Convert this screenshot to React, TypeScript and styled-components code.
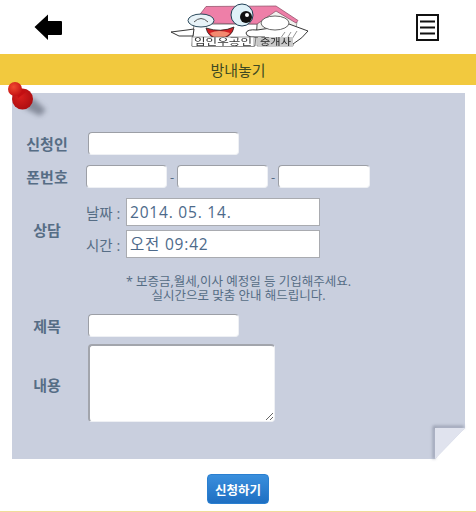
import React from "react";
import styled, { createGlobalStyle } from "styled-components";

const GlobalStyle = createGlobalStyle`
    html, body {
        margin: 0;
        padding: 0;
        background: #fff;
        font-family: "Open Sans", "Noto Sans CJK KR", sans-serif;
    }
    * {
        box-sizing: border-box;
    }
`;

const Page = styled.div`
    position: relative;
    width: 476px;
    height: 512px;
    overflow: hidden;
    display: flex;
    flex-direction: column;
    border-bottom: 1px solid #f0dc9a;
`;

const Header = styled.header`
    height: 54px;
    padding: 0 37px 0 34px;
    display: flex;
    align-items: center;
    justify-content: space-between;
`;

const Logo = styled.svg`
    width: 147px;
    height: 50px;
    margin-bottom: 4px;
    filter: blur(0.4px);
`;

const TitleBar = styled.div`
    height: 31px;
    background: #f2c93e;
    color: #3f4a22;
    font-size: 15px;
    line-height: 32px;
    text-align: center;
`;

const Panel = styled.main`
    position: relative;
    margin: 8px 11px 0 12px;
    height: 366px;
    padding-top: 39px;
    background: #c9cfde;
    clip-path: polygon(0 0, 100% 0, 100% 335px, 423px 100%, 0 100%);
`;

const Row = styled.div<{ $mt?: number; $h: number }>`
    display: grid;
    grid-template-columns: 70px 1fr;
    align-items: center;
    height: ${({ $h }) => $h}px;
    margin-top: ${({ $mt }) => $mt ?? 0}px;
`;

const Label = styled.label<{ $nudge?: number }>`
    padding-top: ${({ $nudge }) => $nudge ?? 0}px;
    text-align: center;
    color: #566d85;
    font-size: 15px;
    font-weight: 700;
    line-height: 20px;
`;

const TextField = styled.input`
    display: block;
    width: 151px;
    height: 23px;
    margin-left: 6px;
    background: #fff;
    border: 1px solid #eef0f4;
    border-top: 1px solid #9c9fa6;
    border-left: 1px solid #9c9fa6;
    border-radius: 4px;
    outline: none;
`;

const PhoneGroup = styled.div`
    display: flex;
    align-items: center;
    margin-left: 4px;
    color: #566d85;
    font-size: 13px;
`;

const PhoneField = styled(TextField)<{ $w: number }>`
    width: ${({ $w }) => $w}px;
    margin-left: 0;
`;

const Dash = styled.span`
    width: 10px;
    text-align: center;
    line-height: 20px;
`;

const Schedule = styled.div`
    display: flex;
    flex-direction: column;
    gap: 4px;
    margin-left: 4px;
`;

const ScheduleLine = styled.div`
    display: flex;
    align-items: center;
    color: #566d85;
    font-size: 14.5px;
`;

const ScheduleName = styled.span`
    width: 40px;
    white-space: nowrap;
`;

const ScheduleValue = styled.div`
    width: 194px;
    height: 28px;
    padding-left: 3px;
    background: #fff;
    border: 1px solid #a9abb0;
    color: #4d6a8a;
    font-size: 15.5px;
    letter-spacing: 0.8px;
    line-height: 27px;
`;

const Note = styled.p`
    margin: 17px 0 0 0;
    color: #566d85;
    font-size: 12.5px;
    line-height: 14px;
    text-align: center;
`;

const Memo = styled.textarea`
    display: block;
    width: 187px;
    height: 78px;
    margin-left: 6px;
    background: #fff;
    border: 1px solid #eef0f4;
    border-top: 2px solid #a2a5ac;
    border-left: 2px solid #a2a5ac;
    border-radius: 4px;
    outline: none;
`;

const Pin = styled.svg`
    position: absolute;
    left: 6px;
    top: 80px;
    width: 44px;
    height: 40px;
`;

const Fold = styled.svg`
    position: absolute;
    left: 428px;
    top: 420px;
    width: 40px;
    height: 42px;
`;

const Footer = styled.div`
    flex: 1;
    display: flex;
    justify-content: center;
    padding: 15px 0 0 0;
`;

const Submit = styled.button`
    width: 62px;
    height: 30px;
    padding: 0;
    border: 1px solid #2a7fd0;
    border-radius: 4px;
    background: linear-gradient(#3a8fdd, #1f6fc2);
    color: #fff;
    font-family: inherit;
    font-size: 12.5px;
    font-weight: 700;
`;

const BackIcon = () => (
    <svg width="28" height="26" viewBox="0 0 28 26">
        <path d="M0.5 13 L14 0.5 L14 7 L27 7 Q28 7 28 8 L28 20 Q28 21 27 21 L14 21 L14 26 Z" fill="#000" />
    </svg>
);

const MenuIcon = () => (
    <svg width="23" height="27" viewBox="0 0 23 27">
        <rect x="1" y="1" width="21" height="25" fill="#fff" stroke="#111" strokeWidth="2" />
        <path d="M4 7.5H19M4 13.5H19M4 19.5H19" stroke="#111" strokeWidth="2" />
    </svg>
);

const LogoArt = () => (
    <Logo viewBox="165 0 147 50">
        {/* roof and wall */}
        <path d="M256 24 L275 9 L296 22 L292 46 L256 46 Z" fill="#f1f1ee" stroke="#777" strokeWidth="0.7" />
        <path d="M193 24 L256 24 L254 46 L191 46 Z" fill="#fff" stroke="#444" strokeWidth="0.7" />
        <path d="M197 17 L205 6.5 L275 6 L297 20.5 L295 23 L275 11 L256 24 L196 23 Z" fill="#ee7fa8" stroke="#8a4660" strokeWidth="0.7" />
        {/* left arm */}
        <path d="M170 32 L186 30 L193 29 L192 36 L178 36 L174 34 Z" fill="#fff" stroke="#222" strokeWidth="0.9" />
        {/* eyes */}
        <ellipse cx="200" cy="20.5" rx="13" ry="6.5" fill="#e8f3f8" stroke="#2b4a5c" strokeWidth="1" />
        <path d="M193 22 Q200 15 207 22" fill="none" stroke="#444" strokeWidth="0.9" />
        <circle cx="241" cy="15" r="11" fill="#dff1f8" stroke="#1f3f55" strokeWidth="1" />
        <circle cx="245" cy="17" r="6" fill="#111" />
        <circle cx="246" cy="15" r="2" fill="#fff" />
        {/* mouth */}
        <path d="M205 28 Q220 33 233 27 Q231 38 218 38.5 Q207 38 205 28 Z" fill="#d21f24" stroke="#222" strokeWidth="0.8" />
        <path d="M209 33 Q218 29 229 33 Q225 38 218 38 Q212 38 209 33 Z" fill="#f38a70" />
        {/* pointing hand */}
        <path d="M245 33 Q246 29 256 30 L270 28 L288 24 L307 31 Q302 38 292 44 L272 45 L264 37 L250 37 Q245 36 245 33 Z" fill="#fff" stroke="#222" strokeWidth="0.9" />
        <ellipse cx="274" cy="23" rx="14" ry="7" fill="#fff" stroke="#555" strokeWidth="0.9" />
        <path d="M284 32 L279 39 M290 32 L285 40 M296 31 L291 39" stroke="#666" strokeWidth="0.7" />
        {/* name plate */}
        <rect x="191" y="37" width="62" height="9.5" fill="#fff" stroke="#444" strokeWidth="0.5" />
        <rect x="257" y="37" width="35" height="9.5" fill="#c9c9c9" />
        <text x="193" y="45" fontSize="9.5" fill="#333" textLength="58" lengthAdjust="spacingAndGlyphs" fontFamily="Noto Sans CJK KR, sans-serif">임인우공인</text>
        <text x="259" y="45" fontSize="9.5" fill="#222" textLength="31" lengthAdjust="spacingAndGlyphs" fontFamily="Noto Sans CJK KR, sans-serif">중개사</text>
    </Logo>
);

const PinArt = () => (
    <Pin viewBox="0 0 44 40">
        <defs>
            <radialGradient id="pinHead" cx="0.4" cy="0.35" r="0.7">
                <stop offset="0" stopColor="#f04a30" />
                <stop offset="1" stopColor="#c30f12" />
            </radialGradient>
            <radialGradient id="pinBody" cx="0.4" cy="0.4" r="0.7">
                <stop offset="0" stopColor="#d81e1c" />
                <stop offset="1" stopColor="#a80c10" />
            </radialGradient>
            <filter id="pinShadow" x="-50%" y="-50%" width="200%" height="200%">
                <feGaussianBlur stdDeviation="2.6" />
            </filter>
        </defs>
        <path d="M18 28 L34 36 L40 30 L26 17 Z" fill="#5a6070" opacity="0.6" filter="url(#pinShadow)" />
        <circle cx="16.5" cy="19" r="10.5" fill="url(#pinBody)" />
        <path d="M9 5 L20 12 L12 18 Z" fill="#c30f12" />
        <circle cx="9" cy="9" r="7" fill="url(#pinHead)" />
    </Pin>
);

const FoldArt = () => (
    <Fold viewBox="0 0 40 42">
        <defs>
            <filter id="foldShadow" x="-30%" y="-30%" width="160%" height="160%">
                <feGaussianBlur stdDeviation="1.4" />
            </filter>
        </defs>
        <path d="M6 39 L6 7 L36 7" fill="none" stroke="#7c8296" strokeWidth="2.4" opacity="0.7" filter="url(#foldShadow)" />
        <path d="M7 39 L7 8 L37 8 Z" fill="#e0e3ee" />
    </Fold>
);

const App: React.FC = () => {
    return (
        <>
            <GlobalStyle />
            <Page>
                <Header>
                    <BackIcon />
                    <LogoArt />
                    <MenuIcon />
                </Header>
                <TitleBar>방내놓기</TitleBar>
                <Panel>
                    <Row $h={23}>
                        <Label>신청인</Label>
                        <TextField />
                    </Row>
                    <Row $h={23} $mt={10}>
                        <Label>폰번호</Label>
                        <PhoneGroup>
                            <PhoneField $w={81} />
                            <Dash>-</Dash>
                            <PhoneField $w={91} />
                            <Dash>-</Dash>
                            <PhoneField $w={92} />
                        </PhoneGroup>
                    </Row>
                    <Row $h={60} $mt={10}>
                        <Label $nudge={3}>상담</Label>
                        <Schedule>
                            <ScheduleLine>
                                <ScheduleName>날짜 :</ScheduleName>
                                <ScheduleValue>2014. 05. 14.</ScheduleValue>
                            </ScheduleLine>
                            <ScheduleLine>
                                <ScheduleName>시간 :</ScheduleName>
                                <ScheduleValue>오전 09:42</ScheduleValue>
                            </ScheduleLine>
                        </Schedule>
                    </Row>
                    <Note>
                        * 보증금,월세,이사 예정일 등 기입해주세요.
                        <br />
                        실시간으로 맞춤 안내 해드립니다.
                    </Note>
                    <Row $h={23} $mt={11}>
                        <Label>제목</Label>
                        <TextField />
                    </Row>
                    <Row $h={78} $mt={7}>
                        <Label $nudge={4}>내용</Label>
                        <Memo />
                    </Row>
                </Panel>
                <Footer>
                    <Submit>신청하기</Submit>
                </Footer>
                <PinArt />
                <FoldArt />
            </Page>
        </>
    );
};

export default App;
